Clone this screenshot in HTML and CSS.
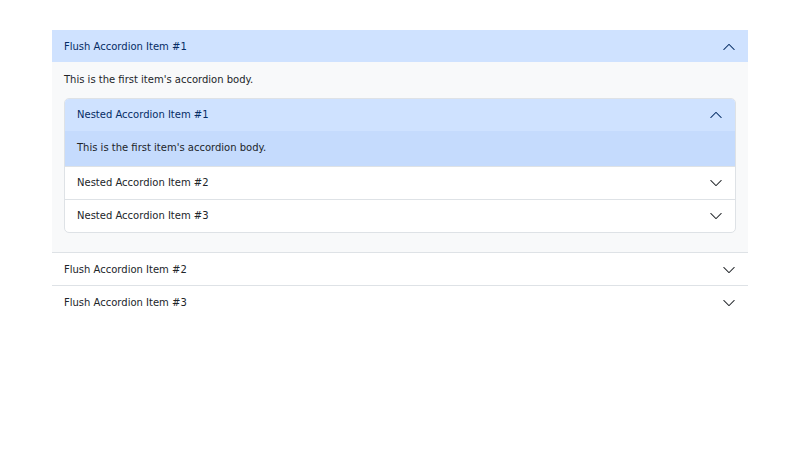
FILE: index.html
```
<!DOCTYPE html>
<html>
<head>
<meta charset="utf-8">
<link rel="stylesheet" href="styles.css">
</head>
<body>
<div class="page">
  <div class="accordion flush">
    <div class="item">
      <div class="header open">
        <span>Flush Accordion Item #1</span>
        <svg class="chev up" viewBox="0 0 16 16"><path d="M1.646 4.646a.5.5 0 0 1 .708 0L8 10.293l5.646-5.647a.5.5 0 0 1 .708.708l-6 6a.5.5 0 0 1-.708 0l-6-6a.5.5 0 0 1 0-.708z"/></svg>
      </div>
      <div class="body">
        <p class="text">This is the first item's accordion body.</p>
        <div class="accordion nested">
          <div class="n-item">
            <div class="n-header open">
              <span>Nested Accordion Item #1</span>
              <svg class="chev up" viewBox="0 0 16 16"><path d="M1.646 4.646a.5.5 0 0 1 .708 0L8 10.293l5.646-5.647a.5.5 0 0 1 .708.708l-6 6a.5.5 0 0 1-.708 0l-6-6a.5.5 0 0 1 0-.708z"/></svg>
            </div>
            <div class="n-body">This is the first item's accordion body.</div>
          </div>
          <div class="n-item">
            <div class="n-header">
              <span>Nested Accordion Item #2</span>
              <svg class="chev" viewBox="0 0 16 16"><path d="M1.646 4.646a.5.5 0 0 1 .708 0L8 10.293l5.646-5.647a.5.5 0 0 1 .708.708l-6 6a.5.5 0 0 1-.708 0l-6-6a.5.5 0 0 1 0-.708z"/></svg>
            </div>
          </div>
          <div class="n-item">
            <div class="n-header">
              <span>Nested Accordion Item #3</span>
              <svg class="chev" viewBox="0 0 16 16"><path d="M1.646 4.646a.5.5 0 0 1 .708 0L8 10.293l5.646-5.647a.5.5 0 0 1 .708.708l-6 6a.5.5 0 0 1-.708 0l-6-6a.5.5 0 0 1 0-.708z"/></svg>
            </div>
          </div>
        </div>
      </div>
    </div>
    <div class="item">
      <div class="header">
        <span>Flush Accordion Item #2</span>
        <svg class="chev" viewBox="0 0 16 16"><path d="M1.646 4.646a.5.5 0 0 1 .708 0L8 10.293l5.646-5.647a.5.5 0 0 1 .708.708l-6 6a.5.5 0 0 1-.708 0l-6-6a.5.5 0 0 1 0-.708z"/></svg>
      </div>
    </div>
    <div class="item">
      <div class="header">
        <span>Flush Accordion Item #3</span>
        <svg class="chev" viewBox="0 0 16 16"><path d="M1.646 4.646a.5.5 0 0 1 .708 0L8 10.293l5.646-5.647a.5.5 0 0 1 .708.708l-6 6a.5.5 0 0 1-.708 0l-6-6a.5.5 0 0 1 0-.708z"/></svg>
      </div>
    </div>
  </div>
</div>
</body>
</html>
```
FILE: styles.css
```
html, body {
  margin: 0;
  padding: 0;
  background: #ffffff;
}
body {
  font-family: "DejaVu Sans", sans-serif;
  font-size: 10px;
  color: #212529;
}
.page {
  padding: 30px 52px;
}
.flush .item {
  border-bottom: 1px solid #dee2e6;
}
.flush .item:last-child {
  border-bottom: none;
}
.header {
  display: flex;
  align-items: center;
  justify-content: space-between;
  height: 32px;
  padding: 1px 12px 0;
  box-sizing: border-box;
  line-height: 20px;
}
.header.open, .n-header.open {
  background: #cfe2ff;
  color: #052c65;
}
.chev {
  width: 14px;
  height: 14px;
  fill: #212529;
  flex: none;
}
.chev.up {
  transform: rotate(180deg);
  fill: #052c65;
}
.body {
  background: #f8f9fa;
  padding: 8px 12px 19px;
}
.text {
  margin: 0 0 8px;
  line-height: 20px;
}
.nested {
  border: 1px solid #dee2e6;
  border-radius: 5px;
  overflow: hidden;
  background: #ffffff;
}
.n-item + .n-item {
  border-top: 1px solid #dee2e6;
}
.n-header {
  display: flex;
  align-items: center;
  justify-content: space-between;
  height: 32px;
  padding: 0 12px 1px;
  box-sizing: border-box;
}
.n-body {
  background: #c5dbfd;
  padding: 0 12px;
  height: 35px;
  line-height: 34px;
  color: #212529;
}
```
